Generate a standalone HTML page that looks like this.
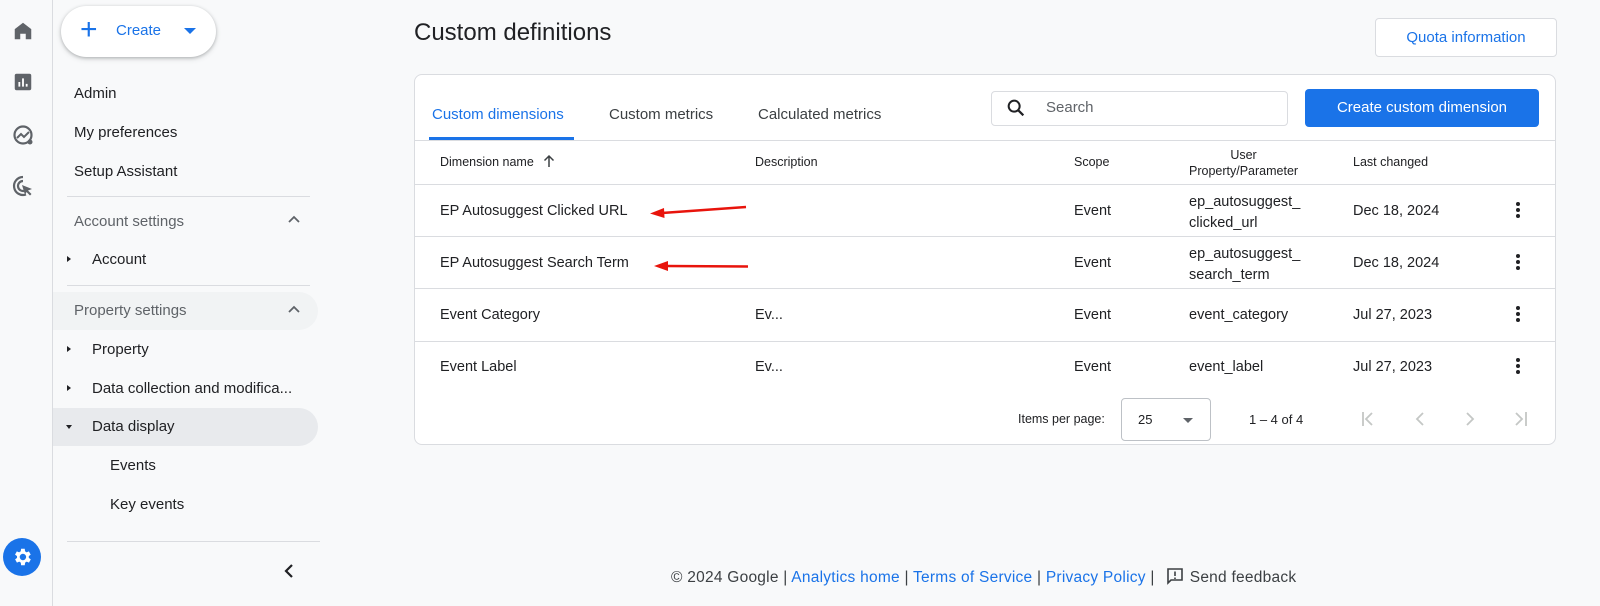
<!DOCTYPE html>
<html><head><meta charset="utf-8"><style>
*{margin:0;padding:0;box-sizing:border-box}
body{width:1600px;height:606px;background:#f8f9fa;font-family:"Liberation Sans",Arial,sans-serif;color:#202124;position:relative;overflow:hidden}
.a{position:absolute;white-space:nowrap}
.rail{left:0;top:0;width:53px;height:606px;border-right:1px solid #dadce0}
.side{font-size:15px;color:#202124}
.hdr{font-size:15px;color:#5f6368}
.hr{position:absolute;height:1px;background:#dadce0}
.tri{width:0;height:0;border-top:3.5px solid transparent;border-bottom:3.5px solid transparent;border-left:4px solid #202124}
.card{left:414px;top:74px;width:1142px;height:371px;background:#fff;border:1px solid #dadce0;border-radius:8px}
.th{font-size:12.5px;color:#202124}
.td{font-size:14.5px;color:#202124}
.blue{color:#1a73e8}
.dots{width:4px;height:4px;border-radius:2px;background:#202124;position:absolute}
</style></head><body>
<div class="a rail"></div>
<svg class="a" style="left:12px;top:20px" width="22" height="22" viewBox="0 0 24 24"><path d="M12 3L3 10v11h6v-6h6v6h6V10z" fill="#5f6368"/></svg>
<svg class="a" style="left:12px;top:71px" width="22" height="22" viewBox="0 0 24 24"><rect x="3" y="3" width="18" height="18" rx="2" fill="#5f6368"/><path d="M8 17v-5M12 17V8M16 17v-3" stroke="#fff" stroke-width="2"/></svg>
<svg class="a" style="left:11px;top:123px" width="24" height="24" viewBox="0 0 24 24"><circle cx="12" cy="12" r="8.5" fill="none" stroke="#5f6368" stroke-width="2.2"/><path d="M6 15l4-4 3 3 5-5" fill="none" stroke="#5f6368" stroke-width="2"/><circle cx="19" cy="19" r="2.5" fill="#5f6368"/></svg>
<svg class="a" style="left:11px;top:174px" width="24" height="24" viewBox="0 0 24 24"><path d="M12 3a9 9 0 1 0 3 17.5M12 7a5 5 0 1 0 1 9.9" fill="none" stroke="#5f6368" stroke-width="2.2"/><path d="M11 11l10 4-4 1.5 3.5 3.5-1.5 1.5-3.5-3.5L14 21z" fill="#5f6368"/></svg>
<div class="a" style="left:3px;top:538px;width:38px;height:38px;border-radius:50%;background:#1a73e8"></div>
<svg class="a" style="left:11px;top:546px" width="22" height="22" viewBox="0 0 24 24"><path fill="#fff" d="M19.4 13a7.5 7.5 0 0 0 0-2l2.1-1.6-2-3.5-2.5 1a7 7 0 0 0-1.7-1L15 3h-4l-.4 2.9a7 7 0 0 0-1.7 1l-2.5-1-2 3.5L6.6 11a7.5 7.5 0 0 0 0 2l-2.1 1.6 2 3.5 2.5-1a7 7 0 0 0 1.7 1L11 21h4l.4-2.9a7 7 0 0 0 1.7-1l2.5 1 2-3.5zM13 15.5A3.5 3.5 0 1 1 13 8.5a3.5 3.5 0 0 1 0 7z"/></svg>

<div class="a" style="left:61px;top:6px;width:155px;height:51px;border-radius:26px;background:#fff;box-shadow:0 1px 3px rgba(60,64,67,.3),0 2px 6px rgba(60,64,67,.15)"></div>
<div class="a blue" style="left:80px;top:13px;font-size:30px;font-weight:300;line-height:34px">+</div>
<div class="a blue" style="left:116px;top:22px;font-size:15px">Create</div>
<div class="a" style="left:184px;top:28px;border-left:6px solid transparent;border-right:6px solid transparent;border-top:6px solid #1a73e8"></div>

<div class="a side" style="left:74px;top:85px">Admin</div>
<div class="a side" style="left:74px;top:124px">My preferences</div>
<div class="a side" style="left:74px;top:163px">Setup Assistant</div>
<div class="hr" style="left:67px;top:196px;width:243px"></div>
<div class="a hdr" style="left:74px;top:213px">Account settings</div>
<svg class="a" style="left:287px;top:214px" width="14" height="10" viewBox="0 0 14 10"><path d="M2 8l5-5 5 5" fill="none" stroke="#5f6368" stroke-width="1.8"/></svg>
<div class="a tri" style="left:67px;top:256px"></div>
<div class="a side" style="left:92px;top:251px">Account</div>
<div class="hr" style="left:67px;top:285px;width:243px"></div>
<div class="a" style="left:53px;top:292px;width:265px;height:38px;background:#f1f3f4;border-radius:0 19px 19px 0"></div>
<div class="a hdr" style="left:74px;top:302px">Property settings</div>
<svg class="a" style="left:287px;top:304px" width="14" height="10" viewBox="0 0 14 10"><path d="M2 8l5-5 5 5" fill="none" stroke="#5f6368" stroke-width="1.8"/></svg>
<div class="a tri" style="left:67px;top:346px"></div>
<div class="a side" style="left:92px;top:341px">Property</div>
<div class="a tri" style="left:67px;top:385px"></div>
<div class="a side" style="left:92px;top:380px">Data collection and modifica...</div>
<div class="a" style="left:53px;top:408px;width:265px;height:38px;background:#e8eaed;border-radius:0 19px 19px 0"></div>
<div class="a" style="left:66px;top:425px;border-left:3.5px solid transparent;border-right:3.5px solid transparent;border-top:4px solid #202124"></div>
<div class="a side" style="left:92px;top:418px">Data display</div>
<div class="a side" style="left:110px;top:457px">Events</div>
<div class="a side" style="left:110px;top:496px">Key events</div>
<div class="hr" style="left:67px;top:541px;width:253px"></div>
<svg class="a" style="left:282px;top:562px" width="14" height="18" viewBox="0 0 14 18"><path d="M10 3L4 9l6 6" fill="none" stroke="#202124" stroke-width="2.2"/></svg>

<div class="a" style="left:414px;top:19px;font-size:24px;color:#202124">Custom definitions</div>
<div class="a" style="left:1375px;top:18px;width:182px;height:39px;background:#fff;border:1px solid #dadce0;border-radius:4px;font-size:15px;color:#1a73e8;text-align:center;line-height:37px">Quota information</div>

<div class="a card"></div>
<div class="a blue" style="left:432px;top:106px;font-size:15px">Custom dimensions</div>
<div class="a" style="left:429px;top:137px;width:145px;height:3px;background:#1a73e8"></div>
<div class="a" style="left:609px;top:106px;font-size:15px;color:#3c4043">Custom metrics</div>
<div class="a" style="left:758px;top:106px;font-size:15px;color:#3c4043">Calculated metrics</div>
<div class="a" style="left:991px;top:91px;width:297px;height:35px;border:1px solid #dadce0;border-radius:4px;background:#fff"></div>
<svg class="a" style="left:1005px;top:97px" width="22" height="22" viewBox="0 0 24 24"><circle cx="10" cy="10" r="6" fill="none" stroke="#202124" stroke-width="2.2"/><path d="M14.5 14.5L20 20" stroke="#202124" stroke-width="2.4"/></svg>
<div class="a" style="left:1046px;top:99px;font-size:15px;color:#5f6368">Search</div>
<div class="a" style="left:1305px;top:89px;width:234px;height:38px;background:#1a73e8;border-radius:4px;color:#fff;font-size:15px;text-align:center;line-height:38px">Create custom dimension</div>
<div class="hr" style="left:415px;top:140px;width:1140px"></div>

<div class="a th" style="left:440px;top:155px">Dimension name</div>
<svg class="a" style="left:543px;top:154px" width="12" height="14" viewBox="0 0 12 14"><path d="M6 13V2M1.5 6.5L6 2l4.5 4.5" fill="none" stroke="#3c4043" stroke-width="1.5"/></svg>
<div class="a th" style="left:755px;top:155px">Description</div>
<div class="a th" style="left:1074px;top:155px">Scope</div>
<div class="a th" style="left:1189px;top:147px;text-align:center;line-height:16px">User<br>Property/Parameter</div>
<div class="a th" style="left:1353px;top:155px">Last changed</div>
<div class="hr" style="left:415px;top:184px;width:1140px"></div>

<div class="a td" style="left:440px;top:203px">EP Autosuggest Clicked URL</div>
<div class="a td" style="left:1074px;top:203px">Event</div>
<div class="a td" style="left:1189px;top:192px;line-height:21px">ep_autosuggest_<br>clicked_url</div>
<div class="a td" style="left:1353px;top:203px">Dec 18, 2024</div>
<div class="hr" style="left:415px;top:236px;width:1140px"></div>
<div class="a td" style="left:440px;top:255px">EP Autosuggest Search Term</div>
<div class="a td" style="left:1074px;top:255px">Event</div>
<div class="a td" style="left:1189px;top:244px;line-height:21px">ep_autosuggest_<br>search_term</div>
<div class="a td" style="left:1353px;top:255px">Dec 18, 2024</div>
<div class="hr" style="left:415px;top:288px;width:1140px"></div>
<div class="a td" style="left:440px;top:307px">Event Category</div>
<div class="a td" style="left:755px;top:307px">Ev...</div>
<div class="a td" style="left:1074px;top:307px">Event</div>
<div class="a td" style="left:1189px;top:307px">event_category</div>
<div class="a td" style="left:1353px;top:307px">Jul 27, 2023</div>
<div class="hr" style="left:415px;top:341px;width:1140px"></div>
<div class="a td" style="left:440px;top:359px">Event Label</div>
<div class="a td" style="left:755px;top:359px">Ev...</div>
<div class="a td" style="left:1074px;top:359px">Event</div>
<div class="a td" style="left:1189px;top:359px">event_label</div>
<div class="a td" style="left:1353px;top:359px">Jul 27, 2023</div>

<div class="dots" style="left:1516px;top:202px"></div><div class="dots" style="left:1516px;top:208px"></div><div class="dots" style="left:1516px;top:214px"></div>
<div class="dots" style="left:1516px;top:254px"></div><div class="dots" style="left:1516px;top:260px"></div><div class="dots" style="left:1516px;top:266px"></div>
<div class="dots" style="left:1516px;top:306px"></div><div class="dots" style="left:1516px;top:312px"></div><div class="dots" style="left:1516px;top:318px"></div>
<div class="dots" style="left:1516px;top:358px"></div><div class="dots" style="left:1516px;top:364px"></div><div class="dots" style="left:1516px;top:370px"></div>

<svg class="a" style="left:648px;top:200px" width="102" height="20" viewBox="0 0 102 20"><path d="M98 7L14 13" stroke="#e8140c" stroke-width="2.5"/><path d="M2 13.5l14-5.5 0.5 10z" fill="#e8140c"/></svg>
<svg class="a" style="left:652px;top:257px" width="100" height="20" viewBox="0 0 100 20"><path d="M96 9.5L14 9" stroke="#e8140c" stroke-width="2.5"/><path d="M2 9l14-5v10z" fill="#e8140c"/></svg>

<div class="a" style="left:1018px;top:412px;font-size:12.5px;color:#202124">Items per page:</div>
<div class="a" style="left:1121px;top:398px;width:90px;height:43px;border:1px solid #bdc1c6;border-radius:4px;background:#fff"></div>
<div class="a" style="left:1138px;top:412px;font-size:13px">25</div>
<div class="a" style="left:1183px;top:418px;border-left:5px solid transparent;border-right:5px solid transparent;border-top:5px solid #5f6368"></div>
<div class="a" style="left:1249px;top:412px;font-size:13px">1 – 4 of 4</div>
<svg class="a" style="left:1356px;top:410px" width="180" height="18" viewBox="0 0 180 18"><g fill="none" stroke="#c4c7c5" stroke-width="1.8"><path d="M7 2v14M16 3l-6 6 6 6"/><path d="M67 3l-6 6 6 6"/><path d="M111 3l6 6-6 6"/><path d="M160 3l6 6-6 6M170 2v14"/></g></svg>

<div class="a" style="left:671px;top:566px;font-size:15.5px;color:#3c4043;letter-spacing:0.25px">© 2024 Google | <span class="blue">Analytics home</span> | <span class="blue">Terms of Service</span> | <span class="blue">Privacy Policy</span> | <svg style="vertical-align:-4px;margin-left:6px" width="20" height="20" viewBox="0 0 20 20"><path d="M3 3h14v11H6l-3 3z" fill="none" stroke="#3c4043" stroke-width="1.6"/><path d="M10 5.5v4.5M10 11.5v1.5" stroke="#3c4043" stroke-width="1.6"/></svg> Send feedback</div>
</body></html>
